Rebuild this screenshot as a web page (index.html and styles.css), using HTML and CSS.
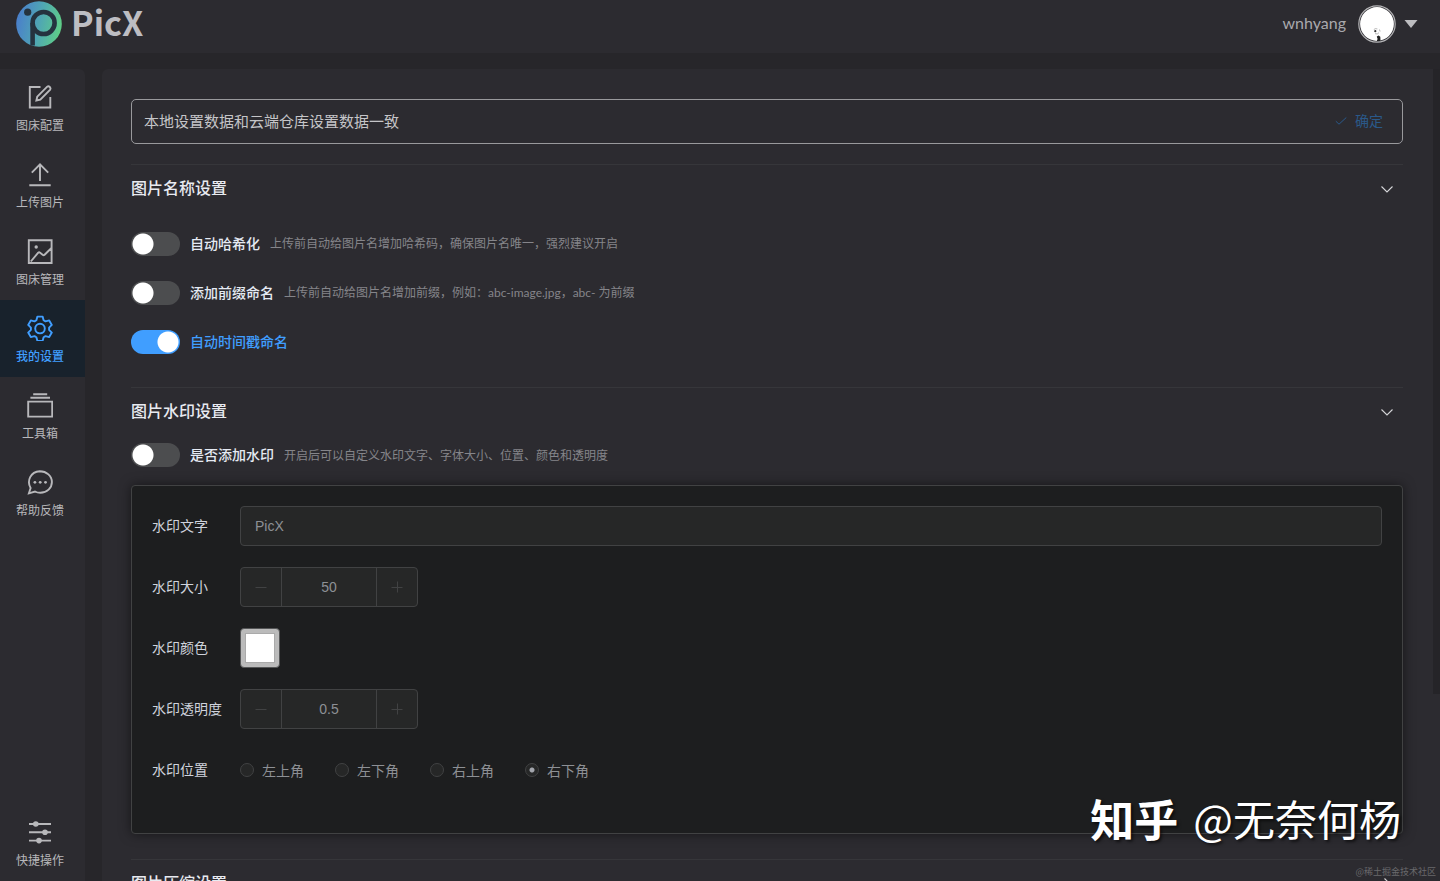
FILE: index.html
```html
<!DOCTYPE html>
<html lang="zh-CN">
<head>
<meta charset="utf-8">
<title>PicX</title>
<link rel="stylesheet" href="styles.css">
</head>
<body>
<header class="header">
  <a class="brand" href="#">
    <svg class="brand-logo" viewBox="0 0 46 46" aria-hidden="true">
      <defs><linearGradient id="brand" x1="0" y1="0.4" x2="1" y2="0.6"><stop offset="0" stop-color="#4a7ecb"/><stop offset="0.5" stop-color="#4fa6b4"/><stop offset="1" stop-color="#5fcf85"/></linearGradient></defs>
      <circle cx="23" cy="23" r="22.8" fill="url(#brand)"/>
      <circle cx="27.6" cy="22" r="11" fill="none" stroke="#25333f" stroke-width="4.6"/>
      <path d="M16.6 22V44.5" stroke="#25333f" stroke-width="4.6"/>
      <circle cx="11.7" cy="11.2" r="3.6" fill="#25333f"/>
    </svg>
    <span>PicX</span>
  </a>
  <button class="user" type="button">
    <span>wnhyang</span>
    <svg class="avatar" viewBox="0 0 38 38" aria-hidden="true">
      <circle cx="19" cy="19" r="18.2" fill="#2c2b30" stroke="#b5b5b7" stroke-width="1.2"/>
      <circle cx="19" cy="19" r="16.9" fill="#fff"/>
      <path d="M18.8 31.5l1.8-1 1.7 1.2.2 4.2-3.8.2.9-2z" fill="#222"/>
      <circle cx="17.3" cy="26.2" r="1.1" fill="#333"/>
      <path d="M15.8 24.5q1.5-1.4 3.6-.6M17 28.7q2.5 1 4-1M21.5 24.5l.6 2" stroke="#888" stroke-width=".6" fill="none"/>
    </svg>
    <svg class="caret" viewBox="0 0 14 8" aria-hidden="true"><path d="M.5 0h13L7 8z" fill="#bdbdc0"/></svg>
  </button>
</header>

<div class="body">
  <nav class="sidebar">
    <a class="nav-item" href="#">
      <svg viewBox="0 0 26 26"><path d="M13.5 3H2.8v20.5h20.5V13"/><path d="M10.3 12.6L20.2 2.7q1.3-.9 2.6.3 1.3 1.4.4 2.6L13.3 15.6l-3.9.9z"/></svg>
      <span>图床配置</span>
    </a>
    <a class="nav-item" href="#">
      <svg viewBox="0 0 26 26"><path d="M13 20V3.5M4.8 11.6L13 3.4l8.2 8.2M2.3 24.2h21.4"/></svg>
      <span>上传图片</span>
    </a>
    <a class="nav-item" href="#">
      <svg viewBox="0 0 26 26"><path d="M1.8 2.2h22.8v22.8H1.8zM3.8 23.5l7.4-8.8q.9-.8 1.9 0l2.8 2.3q.9.6 1.7-.3l6.6-6.5"/><circle cx="9.2" cy="9" r="1.7" class="solid"/></svg>
      <span>图床管理</span>
    </a>
    <a class="nav-item active" href="#" aria-current="page">
      <svg viewBox="0 0 26 26"><path d="M10.4 1.6h5.2l1 3.7 1.9 1.1 3.7-1 2.6 4.5-2.7 2.7v2.3l2.7 2.7-2.6 4.5-3.7-1-1.9 1.1-1 3.7h-5.2l-1-3.7-1.9-1.1-3.7 1-2.6-4.5 2.7-2.7v-2.3L1.200 9.900l2.6-4.500 3.700 1 1.900-1.100z" stroke-linejoin="round"/><circle cx="13" cy="13.600" r="4.800"/></svg>
      <span>我的设置</span>
    </a>
    <a class="nav-item" href="#">
      <svg viewBox="0 0 26 26"><path d="M1.2 9.6h24v15h-24zM3.4 5.700h19.600M6.200 2.200h14"/></svg>
      <span>工具箱</span>
    </a>
    <a class="nav-item" href="#">
      <svg viewBox="0 0 26 26"><path d="M1.900 24.300l1.700-5.300C-.4 12 3.400 2.800 12.800 2.200 19.600 2.200 24.900 7 24.900 13S20 23.800 13.300 23.800c-2.200 0-3.900-.5-5.300-1.300z"/><circle cx="7.900" cy="13.300" r="1.400" class="solid"/><circle cx="13.200" cy="13.300" r="1.400" class="solid"/><circle cx="18.500" cy="13.300" r="1.400" class="solid"/></svg>
      <span>帮助反馈</span>
    </a>
    <a class="nav-item bottom" href="#">
      <svg viewBox="0 0 26 26"><path d="M2 5h22M2 13.300h22M2 21.600h22"/><circle cx="8.800" cy="5" r="2.800" class="solid"/><circle cx="18" cy="13.300" r="2.800" class="solid"/><circle cx="12" cy="21.600" r="2.800" class="solid"/></svg>
      <span>快捷操作</span>
    </a>
  </nav>

  <main class="main">
    <div class="notice">
      <span>本地设置数据和云端仓库设置数据一致</span>
      <button class="confirm" type="button" disabled>
        <svg viewBox="0 0 12 10" aria-hidden="true"><path d="M.8 5.200l3.200 3L11.300 1.500"/></svg>
        <span>确定</span>
      </button>
    </div>

    <section class="section">
      <h2 class="section-title"><span>图片名称设置</span><svg class="chevron" viewBox="0 0 14 14" aria-hidden="true"><path d="M1.500 4.500L7 10l5.500-5.500"/></svg></h2>
      <div class="name-options">
        <label class="option"><input class="switch" type="checkbox"><span class="option-name">自动哈希化</span><span class="option-desc">上传前自动给图片名增加哈希码，确保图片名唯一，强烈建议开启</span></label>
        <label class="option"><input class="switch" type="checkbox"><span class="option-name">添加前缀命名</span><span class="option-desc">上传前自动给图片名增加前缀，例如：abc-image.jpg，abc- 为前缀</span></label>
        <label class="option"><input class="switch" type="checkbox" checked><span class="option-name">自动时间戳命名</span></label>
      </div>
    </section>

    <section class="section">
      <h2 class="section-title"><span>图片水印设置</span><svg class="chevron" viewBox="0 0 14 14" aria-hidden="true"><path d="M1.500 4.500L7 10l5.500-5.500"/></svg></h2>
      <label class="option compact"><input class="switch" type="checkbox"><span class="option-name">是否添加水印</span><span class="option-desc">开启后可以自定义水印文字、字体大小、位置、颜色和透明度</span></label>
      <form class="card">
        <div class="field">
          <label class="field-label" for="mark-text">水印文字</label>
          <input class="text-input" id="mark-text" type="text" value="PicX" disabled>
        </div>
        <div class="field">
          <label class="field-label" for="mark-size">水印大小</label>
          <div class="stepper">
            <button type="button" aria-label="减小" disabled><svg viewBox="0 0 12 12"><path d="M.5 6.500h11"/></svg></button>
            <input id="mark-size" type="text" value="50" disabled>
            <button type="button" aria-label="增大" disabled><svg viewBox="0 0 12 12"><path d="M.5 6.500h11M6.500.5v11"/></svg></button>
          </div>
        </div>
        <div class="field">
          <label class="field-label" for="mark-color">水印颜色</label>
          <input class="color" id="mark-color" type="color" value="#ffffff">
        </div>
        <div class="field">
          <label class="field-label" for="mark-opacity">水印透明度</label>
          <div class="stepper">
            <button type="button" aria-label="减小" disabled><svg viewBox="0 0 12 12"><path d="M.5 6.500h11"/></svg></button>
            <input id="mark-opacity" type="text" value="0.5" disabled>
            <button type="button" aria-label="增大" disabled><svg viewBox="0 0 12 12"><path d="M.5 6.500h11M6.500.5v11"/></svg></button>
          </div>
        </div>
        <div class="field" role="radiogroup" aria-labelledby="mark-pos">
          <span class="field-label" id="mark-pos">水印位置</span>
          <div class="radios">
            <label class="radio"><input type="radio" name="pos" disabled>左上角</label>
            <label class="radio"><input type="radio" name="pos" disabled>左下角</label>
            <label class="radio"><input type="radio" name="pos" disabled>右上角</label>
            <label class="radio"><input type="radio" name="pos" checked disabled>右下角</label>
          </div>
        </div>
      </form>
    </section>

    <section class="section">
      <h2 class="section-title"><span>图片压缩设置</span><svg class="chevron" viewBox="0 0 14 14" aria-hidden="true"><path d="M4.500 1.500L10 7l-5.500 5.500"/></svg></h2>
    </section>
    <div class="scroll-thumb"></div>
  </main>
</div>

<div class="watermark"><strong>知乎</strong><span>@无奈何杨</span></div>
<div class="community">@稀土掘金技术社区</div>
</body>
</html>
```
FILE: styles.css
```css
* {
  box-sizing: border-box;
}

body {
  margin: 0;
  height: 100vh;
  overflow: hidden;
  display: flex;
  flex-direction: column;
  gap: 16px;
  background: #27262a;
  color: #c5c5c8;
  font-family: Lato, "Noto Sans CJK SC", sans-serif;
  font-size: 14px;
}

button,
input {
  font: inherit;
  color: inherit;
  margin: 0;
  padding: 0;
}

button {
  border: 0;
  background: none;
}

svg {
  display: block;
  flex: none;
}

.header {
  flex: none;
  display: flex;
  justify-content: space-between;
  align-items: center;
  height: 53px;
  padding: 0 22px 6px 16px;
  background: #2c2b30;
}

.brand {
  display: flex;
  align-items: center;
  gap: 9px;
  color: #bdbdc2;
  font: 700 34px/42px "Noto Sans CJK SC", sans-serif;
  text-decoration: none;
}

.brand span {
  padding-bottom: 4px;
}

.brand-logo {
  width: 46px;
  height: 46px;
}

.user {
  display: flex;
  align-items: center;
  color: #a9a9ad;
  font-size: 16px;
}

.user span {
  padding-bottom: 2px;
}

.avatar {
  width: 38px;
  height: 38px;
  margin-left: 12px;
}

.caret {
  width: 14px;
  height: 8px;
  margin-left: 8px;
}

.body {
  flex: 1;
  min-height: 0;
  display: flex;
  gap: 17px;
}

.sidebar {
  flex: none;
  display: flex;
  flex-direction: column;
  width: 85px;
  background: #2c2b30;
  border-top-right-radius: 6px;
}

.nav-item {
  display: flex;
  flex-direction: column;
  align-items: center;
  gap: 7px;
  padding: 15px 5px 11px 0;
  color: #b8b8bb;
  font-size: 12px;
  line-height: 18px;
  text-decoration: none;
}

.nav-item svg {
  width: 26px;
  height: 26px;
  fill: none;
  stroke: currentColor;
  stroke-width: 1.9;
}

.nav-item .solid {
  fill: currentColor;
  stroke: none;
}

.nav-item.active {
  background: #18222c;
  color: #409eff;
  font-weight: 500;
}

.nav-item.bottom {
  margin-top: auto;
}

.main {
  position: relative;
  flex: 1;
  min-width: 0;
  overflow: hidden;
  padding: 30px 37px 0 29px;
  background: #2c2b30;
  border-top-left-radius: 6px;
}

.scroll-thumb {
  position: absolute;
  top: 0;
  right: 0;
  width: 7px;
  height: 77%;
  background: #252428;
}

.notice {
  display: flex;
  justify-content: space-between;
  align-items: center;
  height: 45px;
  margin-bottom: 20px;
  padding: 0 19px 2px 12px;
  border: 1px solid #99999c;
  border-radius: 5px;
  font-size: 15px;
}

.confirm {
  display: flex;
  align-items: center;
  gap: 8px;
  color: #2a598a;
  font-size: 14px;
}

.confirm span {
  padding-bottom: 2px;
}

.confirm svg {
  width: 12px;
  height: 10px;
  fill: none;
  stroke: currentColor;
}

.section {
  border-top: 1px solid #36363a;
}

.section-title {
  display: flex;
  justify-content: space-between;
  align-items: center;
  height: 47px;
  margin: 0;
  padding-right: 9px;
  color: #e8eaf0;
  font-size: 16px;
  font-weight: 500;
}

.section-title span {
  padding-bottom: 4px;
}

.chevron {
  width: 14px;
  height: 14px;
  fill: none;
  stroke: #d5d5d8;
  stroke-width: 1.1;
}

.name-options {
  padding: 7px 0 21px;
}

.option {
  display: flex;
  align-items: center;
  gap: 10px;
  height: 49px;
}

.option.compact {
  height: 40px;
}

.switch {
  appearance: none;
  flex: none;
  width: 49px;
  height: 24px;
  border-radius: 12px;
  background: radial-gradient(circle at 12px 12px, #fff 10px, #4c4d4f 11px);
}

.switch:checked {
  background: radial-gradient(circle at 37px 12px, #fff 10px, #409eff 11px);
}

.option-name {
  padding-bottom: 2px;
  color: #e5eaf3;
  font-weight: 500;
}

.switch:checked + .option-name {
  color: #409eff;
}

.option-desc {
  padding-bottom: 2px;
  color: #85858a;
  font-size: 12px;
}

.card {
  display: flex;
  flex-direction: column;
  gap: 21px;
  margin: 10px 0 25px;
  padding: 20px 20px 43px;
  border: 1px solid #414243;
  border-radius: 4px;
  background: #1d1e1f;
  box-shadow: 0 0 12px rgba(0, 0, 0, 0.5);
}

.field {
  display: flex;
  align-items: center;
  height: 40px;
}

.field-label {
  flex: none;
  width: 88px;
  padding-bottom: 2px;
  color: #cfd3dc;
}

.text-input {
  flex: 1;
  min-width: 0;
  height: 40px;
  padding: 0 14px;
}

.text-input,
.stepper {
  border: 1px solid #414243;
  border-radius: 4px;
  background: #262727;
  color: #8d9095;
  font-family: "Liberation Sans", sans-serif;
}

.stepper {
  display: flex;
  width: 178px;
  height: 40px;
}

.stepper button {
  display: grid;
  place-items: center;
  width: 40px;
  color: #414243;
}

.stepper input {
  flex: 1;
  min-width: 0;
  border: solid #414243;
  border-width: 0 1px;
  background: none;
  text-align: center;
}

.stepper svg {
  width: 12px;
  height: 12px;
  stroke: currentColor;
}

.color {
  appearance: none;
  width: 40px;
  height: 40px;
  padding: 4px;
  border: 1px solid #555657;
  border-radius: 4px;
  background: #bbb;
}

.color::-webkit-color-swatch-wrapper {
  padding: 0;
}

.color::-webkit-color-swatch {
  border: 1px solid #aaa;
}

.radios {
  display: flex;
  gap: 31px;
}

.radio {
  display: flex;
  align-items: center;
  gap: 8px;
  color: #8d9095;
}

.radio input {
  appearance: none;
  width: 14px;
  height: 14px;
  border: 1px solid #414243;
  border-radius: 50%;
  background: #262727;
}

.radio input:checked {
  background: radial-gradient(circle, #a3a6ad 2px, #262727 3px);
}

.watermark {
  position: absolute;
  right: 39px;
  bottom: 32px;
  display: flex;
  align-items: center;
  gap: 15px;
  color: #fff;
  font: 42px/62px "Noto Sans CJK SC", sans-serif;
  text-shadow: 2px 2px 3px rgba(0, 0, 0, 0.6);
}

.watermark strong {
  font-size: 44px;
}

.community {
  position: absolute;
  right: 4px;
  bottom: 2px;
  color: #69696c;
  font: 9px/14px "Noto Sans CJK SC", sans-serif;
}
```
